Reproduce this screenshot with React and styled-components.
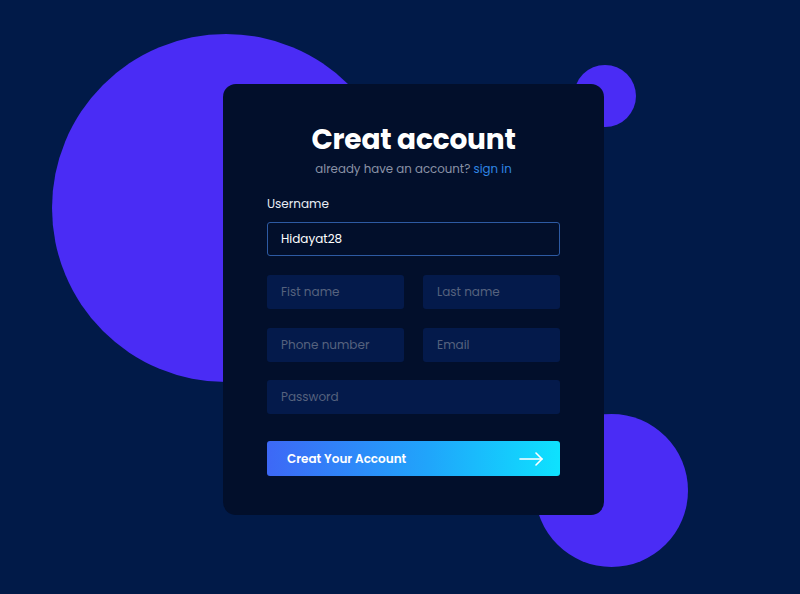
import React from "react";
import styled, { createGlobalStyle } from "styled-components";

const Global = createGlobalStyle`
  html, body { margin: 0; padding: 0; background: #011a48; }
  * { box-sizing: border-box; }
`;

const Stage = styled.div`
  position: relative;
  width: 800px;
  height: 594px;
  overflow: hidden;
  background: #011a48;
  font-family: Poppins, Inter, "Noto Sans", sans-serif;
  padding: 84px 0 0 223px;
`;

const Blob = styled.div`
  position: absolute;
  border-radius: 50%;
  background: #4a2cf5;
  left: ${(p) => p.$x}px;
  top: ${(p) => p.$y}px;
  width: ${(p) => p.$d}px;
  height: ${(p) => p.$d}px;
`;

const Card = styled.div`
  position: relative;
  width: 381px;
  height: 431px;
  background: #020f2b;
  border-radius: 13px;
  padding: 38px 44px 0 44px;
  display: flex;
  flex-direction: column;
`;

const Title = styled.h1`
  margin: 0;
  font-size: 28px;
  line-height: 36px;
  font-weight: 700;
  color: #ffffff;
  text-align: center;
  letter-spacing: -0.2px;
`;

const Sub = styled.p`
  margin: 2px 0 0;
  font-size: 11.8px;
  line-height: 18px;
  color: #8a92a6;
  text-align: center;
`;

const Link = styled.a`
  color: #2f86e4;
  text-decoration: none;
`;

const Label = styled.label`
  margin-top: 17px;
  font-size: 12px;
  line-height: 18px;
  color: #e8ecf4;
`;

const Field = styled.input`
  width: 100%;
  height: 34px;
  border-radius: 3px;
  border: 1px solid ${(p) => (p.$active ? "#2d5aa3" : "transparent")};
  background: ${(p) => (p.$active ? "#020f2b" : "#041a4b")};
  padding: 0 13px;
  font-family: inherit;
  font-size: 12px;
  color: #ffffff;
  outline: none;
  &::placeholder { color: #56627e; }
`;

const UserField = styled(Field)`
  margin-top: 9px;
`;

const Grid = styled.div`
  margin-top: 19px;
  display: grid;
  grid-template-columns: 1fr 1fr;
  column-gap: 19px;
  row-gap: 18.5px;
`;

const Wide = styled.div`
  grid-column: 1 / span 2;
`;

const Button = styled.button`
  margin-top: 27px;
  height: 35px;
  width: 100%;
  border: none;
  border-radius: 3px;
  background: linear-gradient(90deg, #3d68f6 0%, #20a5fb 55%, #0ee2fe 100%);
  display: flex;
  align-items: center;
  justify-content: space-between;
  padding: 0 16px 0 20px;
  font-family: inherit;
  font-size: 12px;
  font-weight: 600;
  color: #ffffff;
  cursor: pointer;
`;

const Arrow = () => (
  <svg width="25" height="14" viewBox="0 0 25 14" fill="none" stroke="#fff" strokeWidth="1.6" strokeLinecap="round" strokeLinejoin="round">
    <path d="M1 7h22" />
    <path d="M17 1l6 6-6 6" />
  </svg>
);

export default function App() {
  return (
    <>
      <Global />
      <Stage>
        <Blob $x={52} $y={34} $d={348} />
        <Blob $x={574} $y={65} $d={62} />
        <Blob $x={535} $y={414} $d={153} />
        <Card>
          <Title>Creat account</Title>
          <Sub>
            already have an account? <Link href="#">sign in</Link>
          </Sub>
          <Label>Username</Label>
          <UserField $active defaultValue="Hidayat28" />
          <Grid>
            <Field placeholder="Fist name" />
            <Field placeholder="Last name" />
            <Field placeholder="Phone number" />
            <Field placeholder="Email" />
            <Wide>
              <Field placeholder="Password" type="password" />
            </Wide>
          </Grid>
          <Button>
            <span>Creat Your Account</span>
            <Arrow />
          </Button>
        </Card>
      </Stage>
    </>
  );
}
